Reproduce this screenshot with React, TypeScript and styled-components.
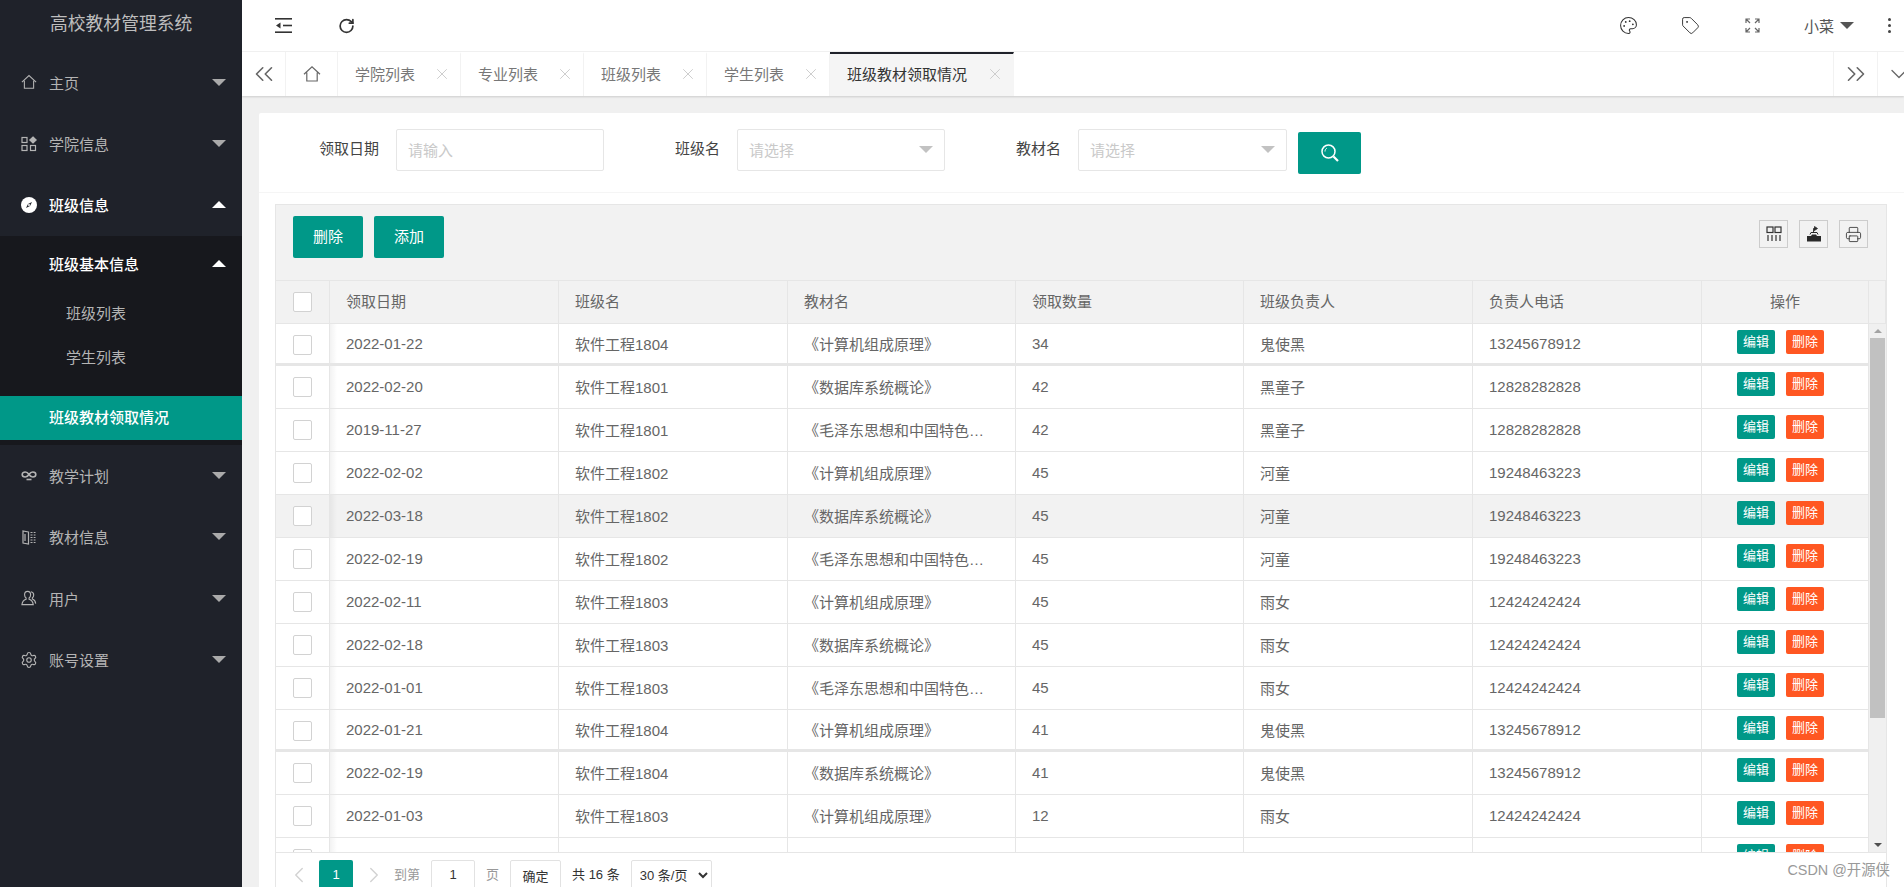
import React from "react";
import styled, { createGlobalStyle } from "styled-components";
import { ChevronsLeft, ChevronsRight, ChevronDown, ChevronLeft, ChevronRight, X, RotateCw, Palette, Tag, Settings, Printer } from "lucide-react";

const Global = createGlobalStyle`
  html, body { margin: 0; padding: 0; height: 100%; overflow: hidden; }
  body { font-family: "Liberation Sans", "Noto Sans CJK SC", sans-serif; font-size: 14px; color: #666; }
  * { box-sizing: border-box; }
`;

const Shell = styled.div`display: flex; width: 1904px; height: 887px; overflow: hidden; position: relative; background: #f0f0f0;`;
const Sidebar = styled.aside`width: 242px; flex: none; background: #1f222a; color: #b4b4b4; display: flex; flex-direction: column;`;
const Logo = styled.div`height: 52px; padding: 13px 0 0 50px; font-size: 17.8px; line-height: 22px; color: #bdbdbd;`;
const NavRow = styled.div<{ $on?: boolean }>`
  height: 61.4px; display: flex; align-items: center; padding: 0 16px 1px 21px; font-size: 15px;
  color: ${(p) => (p.$on ? "#fff" : "#b4b4b4")}; font-weight: ${(p) => (p.$on ? 500 : 400)};
`;
const NavIcon = styled.span`width: 16px; height: 16px; margin-right: 12px; display: flex; align-items: center; justify-content: center; color: inherit; svg { display: block; flex: none; }`;
const NavLabel = styled.span`flex: 1;`;
const Caret = styled.i<{ $up?: boolean; $on?: boolean }>`
  width: 0; height: 0; border-left: 7px solid transparent; border-right: 7px solid transparent;
  ${(p) => (p.$up ? `border-bottom: 7px solid ${p.$on ? "#fff" : "#aaa"};` : `border-top: 7px solid ${p.$on ? "#fff" : "#aaa"};`)}
`;
const UserCaret = styled.i`width: 0; height: 0; border-left: 7px solid transparent; border-right: 7px solid transparent; border-top: 7px solid #555;`;
const SubMenu = styled.div`background: #17181d; height: 209px; display: flex; flex-direction: column;`;
const SubHead = styled.div`height: 55px; display: flex; align-items: center; padding: 0 16px 1px 49px; font-size: 15px; color: #fff; font-weight: 500;`;
const SubLink = styled.div`height: 44px; line-height: 46px; padding-left: 66px; font-size: 15px; color: #b4b4b4;`;
const SubActive = styled.div`height: 44px; line-height: 44px; margin-top: 17px; padding-left: 49px; font-size: 15px; color: #fff; background: #009888; font-weight: 500;`;

const Main = styled.main`flex: 1; min-width: 0; display: flex; flex-direction: column;`;
const TopBar = styled.header`height: 52px; flex: none; background: #fff; border-bottom: 1px solid #f2f2f2; display: flex; align-items: center; color: #333;`;
const TopLeft = styled.button`width: 17px; height: 17px; padding: 0; border: 0; background: none; color: #333; display: flex; margin-left: 33px; margin-right: 13px;`;
const TopSpacer = styled.div`flex: 1;`;
const TopIcon = styled.span<{ $c?: string }>`width: 62px; display: flex; justify-content: center; color: ${(p) => p.$c || "#333"};`;
const UserName = styled.span`font-size: 15px; color: #555; margin-left: 20px; display: flex; align-items: center; gap: 6px;`;
const Dots = styled.span`margin-left: 34px; margin-right: 13px; display: flex; flex-direction: column; gap: 3px; i { width: 3px; height: 3px; border-radius: 50%; background: #444; display: block; }`;

const TabBar = styled.nav`height: 44px; flex: none; background: #fff; display: flex; align-items: stretch; box-shadow: 0 1px 2px rgba(0,0,0,.15); position: relative; z-index: 1;`;
const TabCell = styled.div<{ $w: number }>`width: ${(p) => p.$w}px; flex: none; display: flex; align-items: center; justify-content: center; color: #666; border-right: 1px solid #f2f2f2; padding-bottom: 1px;`;
const Tab = styled.div<{ $active?: boolean }>`
  flex: none; display: flex; align-items: center; justify-content: space-between; padding: 0 9px 3px 17px;
  width: ${(p) => (p.$active ? 184 : 123)}px; font-size: 15px;
  color: ${(p) => (p.$active ? "#333" : "#777")};
  background: ${(p) => (p.$active ? "#f5f5f5" : "#fff")};
  border-right: 1px solid ${(p) => (p.$active ? "#f5f5f5" : "#f2f2f2")};
  border-top: 2px solid ${(p) => (p.$active ? "#1f222a" : "transparent")};
  svg { color: #c4c4c4; flex: none; }
`;
const TabFill = styled.div`flex: 1;`;
const TabEdge = styled.div<{ $w: number }>`width: ${(p) => p.$w}px; flex: none; display: flex; align-items: center; justify-content: center; color: #666; border-left: 1px solid #f2f2f2; overflow: hidden; padding-bottom: 1px; svg { flex: none; }`;
const TabEdgeEnd = styled(TabEdge)`justify-content: flex-start; padding-left: 7px;`;

const Content = styled.div`flex: 1; min-height: 0; padding: 17px 0 0 17px; background: #f0f0f0;`;
const Card = styled.section`height: 100%; background: #fff; border-radius: 2px 0 0 0; display: flex; flex-direction: column;`;
const SearchForm = styled.form`height: 80px; flex: none; padding: 16px 0 0 22px; border-bottom: 1px solid #f5f5f5; display: flex; align-items: flex-start;`;
const FieldLabel = styled.label<{ $w: number }>`width: ${(p) => p.$w}px; height: 42px; line-height: 40px; text-align: right; font-size: 15px; color: #444; margin-right: 17px; flex: none;`;
const FieldBox = styled.div<{ $w: number }>`width: ${(p) => p.$w}px; height: 42px; border: 1px solid #e6e6e6; border-radius: 2px; flex: none; display: flex; align-items: center; justify-content: space-between; padding: 0 11px 2px; color: #c9c9c9; font-size: 15px;`;
const SelectArrow = styled.i`width: 0; height: 0; border-left: 7px solid transparent; border-right: 7px solid transparent; border-top: 7px solid #c2c2c2;`;
const SearchBtn = styled.button`width: 63px; height: 42px; margin: 3px 0 0 11px; border: 0; border-radius: 2px; background: #009888; color: #fff; display: flex; align-items: center; justify-content: center; padding: 0;`;

const Pane = styled.div`margin: 11px 17px 0 16px; border: 1px solid #e6e6e6; border-bottom: 0; flex: 1; min-height: 0; display: flex; flex-direction: column;`;
const Toolbar = styled.div`height: 75px; flex: none; background: #f2f2f2; padding: 11px 18px 0 17px; display: flex; align-items: flex-start; gap: 11px;`;
const ToolButton = styled.button`width: 70px; height: 42px; border: 0; border-radius: 2px; background: #009888; color: #fff; font: inherit; font-size: 15px; padding: 0 0 3px;`;
const ToolSpacer = styled.div`flex: 1;`;
const ToolIcon = styled.span`width: 29px; height: 28px; border: 1px solid #ccc; margin: 4px 0 0 0; display: flex; align-items: center; justify-content: center; color: #333;`;

const Grid = styled.table<{ $w: number }>`width: ${(p) => p.$w}px; border-collapse: separate; border-spacing: 0; table-layout: fixed; font-size: 15px; color: #666;`;
const HeadWrap = styled.div`flex: none; background: #f2f2f2; border-top: 1px solid #e6e6e6; height: 44px;`;
const Th = styled.th<{ $center?: boolean; $box?: boolean }>`
  height: 43px; padding: 0 ${(p) => (p.$box ? "0" : "16px 3px")}; font-weight: 400; color: #666;
  text-align: ${(p) => (p.$center ? "center" : "left")};
  border-right: 1px solid #e6e6e6; border-bottom: 1px solid #e6e6e6;
`;
const Body = styled.div`height: 528px; flex: none; display: flex; overflow: hidden;`;
const BodyClip = styled.div`flex: none; width: 1593px; overflow: hidden;`;
const Tr = styled.tr<{ $hl?: boolean }>`background: ${(p) => (p.$hl ? "#f2f2f2" : "#fff")};`;
const Td = styled.td<{ $thick?: boolean; $shade?: boolean; $box?: boolean }>`
  height: ${(p) => (p.$thick ? 42 : 43)}px; padding: 0 ${(p) => (p.$box ? "0" : "16px 2px")}; white-space: nowrap; overflow: hidden;
  border-right: 1px solid #e6e6e6;
  border-bottom: 1px solid #e6e6e6;
  ${(p) => (p.$thick ? "box-shadow: inset 0 -2px 0 #e6e6e6;" : "")}
  ${(p) => (p.$shade ? "background-image: linear-gradient(to right, rgba(0,0,0,.05), rgba(0,0,0,0) 7px);" : "")}
`;
const ActionTd = styled(Td)`padding: 6px 0 0 35px; vertical-align: top;`;
const Check = styled.span`display: block; width: 19px; height: 20px; margin: 0 auto 0 17px; background: #fff; border: 1px solid #d2d2d2; border-radius: 2px;`;
const Actions = styled.div`display: flex; gap: 11px;`;
const MiniBtn = styled.button<{ $danger?: boolean }>`width: 38px; height: 24px; padding: 0; border: 0; border-radius: 2px; color: #fff; font: inherit; font-size: 13px; line-height: 24px; background: ${(p) => (p.$danger ? "#ff5722" : "#009888")};`;
const ScrollTrack = styled.div`width: 17px; flex: none; background: #f0f0f0; display: flex; flex-direction: column; align-items: center;`;
const ThumbUp = styled.i`margin-top: 5px; width: 0; height: 0; border-left: 4px solid transparent; border-right: 4px solid transparent; border-bottom: 4px solid #a3a3a3;`;
const Thumb = styled.div`width: 15px; height: 380px; background: #c1c1c1; margin-top: 5px;`;
const ScrollFill = styled.div`flex: 1;`;
const ThumbDown = styled.i`margin-bottom: 5px; width: 0; height: 0; border-left: 4px solid transparent; border-right: 4px solid transparent; border-top: 4px solid #505050;`;

const Pager = styled.div`height: 44px; flex: none; border-top: 1px solid #e6e6e6; background: #fff; padding: 7px 0 0 17px; display: flex; align-items: flex-start; font-size: 13px; color: #333;`;
const PagerArrow = styled.span<{ $w: number }>`width: ${(p) => p.$w}px; height: 30px; display: flex; align-items: center; justify-content: center; color: #d2d2d2; flex: none; svg { flex: none; }`;
const PageNum = styled.span`width: 34px; height: 30px; line-height: 30px; text-align: center; background: #009888; color: #fff; border-radius: 2px; flex: none;`;
const PagerText = styled.span<{ $m: number; $muted?: boolean }>`height: 30px; line-height: 30px; margin-left: ${(p) => p.$m}px; color: ${(p) => (p.$muted ? "#999" : "#333")}; flex: none;`;
const PageInput = styled.span`width: 44px; height: 30px; line-height: 28px; margin-left: 11px; text-align: center; border: 1px solid #e2e2e2; border-radius: 2px; color: #333; flex: none;`;
const PageOk = styled.button`width: 51px; height: 30px; margin-left: 11px; padding: 0; background: #fff; border: 1px solid #e2e2e2; border-radius: 2px; color: #333; font: inherit; flex: none;`;
const PageSize = styled.select`width: 81px; height: 30px; margin-left: 11px; border: 1px solid #e2e2e2; border-radius: 2px; background: #fff; color: #333; font: inherit; padding: 0 4px; flex: none;`;
const Watermark = styled.div`position: absolute; right: 14px; top: 860px; font-size: 14.4px; line-height: 20px; color: #999;`;

const Line = { fill: "none", stroke: "currentColor", strokeWidth: 1.2 } as const;
const IconHome = ({ s = 16 }: { s?: number }) => (
  <svg width={s} height={s} viewBox="0 0 18 18" {...Line}><path d="M1 9.2 9 1.8l8 7.4M3.8 7.500V16h10.400V7.500" /></svg>
);
const IconApps = () => (
  <svg width="16" height="16" viewBox="0 0 16 16" {...Line}>
    <rect x="1" y="1.500" width="5" height="5" /><rect x="1" y="9.500" width="5" height="5" /><rect x="9.500" y="9.500" width="5" height="5" />
    <path d="M12 1l3.200 3-3.200 3-3.200-3z" fill="currentColor" />
  </svg>
);
const IconCompass = () => (
  <svg width="16" height="16" viewBox="0 0 16 16">
    <circle cx="8" cy="8" r="8" fill="#fff" />
    <path d="M11 5 9 9 5 11l2-4z" fill="#1f222a" />
    <circle cx="8" cy="8" r="1" fill="#fff" />
  </svg>
);
const IconLoop = () => (
  <svg width="16" height="16" viewBox="0 0 16 16" {...Line} strokeWidth={1.6}>
    <path d="M8 7.500C6.800 5.600 5.600 5 4.200 5 2.700 5 1.200 6 1.200 7.500S2.700 10 4.200 10C5.600 10 6.800 9.400 8 7.500c1.200-1.900 2.400-2.500 3.800-2.500 1.500 0 3 1 3 2.500s-1.500 2.500-3 2.500C10.400 10 9.200 9.400 8 7.500z" />
    <path d="M5.500 12.500h5" />
  </svg>
);
const IconBook = () => (
  <svg width="16" height="16" viewBox="0 0 16 16" {...Line}>
    <path d="M7.500 3 2 2v12l5.500 1zM4 5v7" />
    <path d="M9.500 3.500h5M9.500 6h5M9.500 8.500h5M9.500 11h5M9.500 13.500h5" strokeDasharray="2 1.200" />
  </svg>
);
const IconUsers = () => (
  <svg width="16" height="16" viewBox="0 0 17 17" {...Line}>
    <path d="M7 1.500c2 0 3.200 1.600 3.200 3.500 0 1.500-.7 2.800-1.600 3.500v1.300c2.500.8 4 1.800 4.400 5.700H1c.4-3.900 1.900-4.900 4.400-5.700V8.500C4.500 7.800 3.800 6.500 3.800 5c0-1.900 1.200-3.500 3.200-3.500z" />
    <path d="M10.500 1.800c1.900.3 3 1.700 3 3.400 0 1.300-.5 2.400-1.400 3.100v1.300c1.900.6 3.200 1.600 3.500 4.900" />
  </svg>
);
const IconIndent = () => (
  <svg width="17" height="17" viewBox="0 0 17 17" fill="currentColor">
    <rect x="0" y="1" width="17" height="1.600" /><rect x="8" y="7.700" width="9" height="1.600" /><rect x="0" y="14.400" width="17" height="1.600" />
    <path d="M5.500 5.500v6L1 8.500z" />
  </svg>
);
const IconFull = () => (
  <svg width="15" height="15" viewBox="0 0 15 15" {...Line}>
    <path d="M1 5V1h4M1 1l4 4M14 5V1h-4M14 1l-4 4M1 10v4h4M1 14l4-4M14 10v4h-4M14 14l-4-4" />
  </svg>
);
const IconCols = () => (
  <svg width="16" height="16" viewBox="0 0 16 16" {...Line}>
    <rect x="1" y="1" width="6" height="5.500" /><rect x="9" y="1" width="6" height="5.500" />
    <path d="M2 9v6M6 9v6M10 9v6M14 9v6" />
  </svg>
);
const IconExport = () => (
  <svg width="16" height="16" viewBox="0 0 16 16">
    <path d="M1 10h4l1-1.500h4l1 1.500h4v5.500H1z" fill="#2a2a2a" />
    <path d="M4 8.500l1-2h6l1 2" fill="none" stroke="#2a2a2a" strokeWidth="1" />
    <path d="M7.500 7V2.500h1.500M8.500 .5l3 2-3 2z" fill="#2a2a2a" stroke="#2a2a2a" strokeWidth=".8" />
  </svg>
);
const IconSearch = () => (
  <svg width="20" height="20" viewBox="0 0 20 20" fill="none" stroke="#fff" strokeWidth="1.500">
    <circle cx="8.500" cy="8.500" r="6.500" /><path d="M13.500 13.500l4.500 4.500" strokeWidth="2.200" /><path d="M5 8.500c0-1.500.7-2.700 1.800-3.300" strokeWidth="1" />
  </svg>
);

const tabs = ["学院列表", "专业列表", "班级列表", "学生列表"];
const book1 = "《计算机组成原理》";
const book2 = "《数据库系统概论》";
const book3 = "《毛泽东思想和中国特色…";
const g = ["鬼使黑", "13245678912"];
const b = ["黑童子", "12828282828"];
const h = ["河童", "19248463223"];
const y = ["雨女", "12424242424"];
const rows: [string, string, string, string, string[]][] = [
  ["2022-01-22", "软件工程1804", book1, "34", g],
  ["2022-02-20", "软件工程1801", book2, "42", b],
  ["2019-11-27", "软件工程1801", book3, "42", b],
  ["2022-02-02", "软件工程1802", book1, "45", h],
  ["2022-03-18", "软件工程1802", book2, "45", h],
  ["2022-02-19", "软件工程1802", book3, "45", h],
  ["2022-02-11", "软件工程1803", book1, "45", y],
  ["2022-02-18", "软件工程1803", book2, "45", y],
  ["2022-01-01", "软件工程1803", book3, "45", y],
  ["2022-01-21", "软件工程1804", book1, "41", g],
  ["2022-02-19", "软件工程1804", book2, "41", g],
  ["2022-01-03", "软件工程1803", book1, "12", y],
  ["", "", "", "", ["", ""]],
];
const widths = [54, 229, 229, 228, 228, 229, 229];

const Col = styled.col<{ $w: number }>`width: ${(p) => p.$w}px;`;
const Cols = ({ main, patch }: { main: number; patch?: number }) => (
  <colgroup>
    {widths.map((w, i) => <Col key={i} $w={w} />)}
    <Col $w={main} />
    {patch ? <Col $w={patch} /> : null}
  </colgroup>
);

export default function App() {
  const nav = (label: string, icon: React.ReactNode) => (
    <NavRow><NavIcon>{icon}</NavIcon><NavLabel>{label}</NavLabel><Caret /></NavRow>
  );
  return (
    <Shell>
      <Global />
      <Sidebar>
        <Logo>高校教材管理系统</Logo>
        {nav("主页", <IconHome />)}
        {nav("学院信息", <IconApps />)}
        <NavRow $on><NavIcon><IconCompass /></NavIcon><NavLabel>班级信息</NavLabel><Caret $up $on /></NavRow>
        <SubMenu>
          <SubHead><NavLabel>班级基本信息</NavLabel><Caret $up $on /></SubHead>
          <SubLink>班级列表</SubLink>
          <SubLink>学生列表</SubLink>
          <SubActive>班级教材领取情况</SubActive>
        </SubMenu>
        {nav("教学计划", <IconLoop />)}
        {nav("教材信息", <IconBook />)}
        {nav("用户", <IconUsers />)}
        {nav("账号设置", <Settings size={18} strokeWidth={1.5} />)}
      </Sidebar>
      <Main>
        <TopBar>
          <TopLeft aria-label="收起"><IconIndent /></TopLeft>
          <TopLeft aria-label="刷新"><RotateCw size={18} strokeWidth={2.4} /></TopLeft>
          <TopSpacer />
          <TopIcon><Palette size={19} strokeWidth={1.3} /></TopIcon>
          <TopIcon><Tag size={19} strokeWidth={1.2} /></TopIcon>
          <TopIcon $c="#666"><IconFull /></TopIcon>
          <UserName>小菜<UserCaret /></UserName>
          <Dots><i /><i /><i /></Dots>
        </TopBar>
        <TabBar>
          <TabCell $w={44}><ChevronsLeft size={30} strokeWidth={1.3} /></TabCell>
          <TabCell $w={52}><IconHome s={18} /></TabCell>
          {tabs.map((t) => (
            <Tab key={t}>{t}<X size={18} strokeWidth={1.1} /></Tab>
          ))}
          <Tab $active>班级教材领取情况<X size={18} strokeWidth={1.1} /></Tab>
          <TabFill />
          <TabEdge $w={44}><ChevronsRight size={30} strokeWidth={1.3} /></TabEdge>
          <TabEdgeEnd $w={27}><ChevronDown size={28} strokeWidth={1.1} /></TabEdgeEnd>
        </TabBar>
        <Content>
          <Card>
            <SearchForm>
              <FieldLabel $w={98}>领取日期</FieldLabel>
              <FieldBox $w={208}>请输入</FieldBox>
              <FieldLabel $w={116}>班级名</FieldLabel>
              <FieldBox $w={208}>请选择<SelectArrow /></FieldBox>
              <FieldLabel $w={116}>教材名</FieldLabel>
              <FieldBox $w={209}>请选择<SelectArrow /></FieldBox>
              <SearchBtn type="button" aria-label="搜索"><IconSearch /></SearchBtn>
            </SearchForm>
            <Pane>
              <Toolbar>
                <ToolButton>删除</ToolButton>
                <ToolButton>添加</ToolButton>
                <ToolSpacer />
                <ToolIcon><IconCols /></ToolIcon>
                <ToolIcon><IconExport /></ToolIcon>
                <ToolIcon><Printer size={17} strokeWidth={1.2} /></ToolIcon>
              </Toolbar>
              <HeadWrap>
                <Grid $w={1610}>
                  <Cols main={167} patch={17} />
                  <thead>
                    <tr>
                      <Th $box><Check /></Th>
                      <Th>领取日期</Th>
                      <Th>班级名</Th>
                      <Th>教材名</Th>
                      <Th>领取数量</Th>
                      <Th>班级负责人</Th>
                      <Th>负责人电话</Th>
                      <Th $center>操作</Th>
                      <Th $box />
                    </tr>
                  </thead>
                </Grid>
              </HeadWrap>
              <Body>
                <BodyClip>
                  <Grid $w={1593}>
                    <Cols main={167} />
                    <tbody>
                      {rows.map((r, i) => {
                        const thick = i === 0 || i === 9;
                        return (
                          <Tr key={i} $hl={i === 4}>
                            <Td $box $thick={thick}><Check /></Td>
                            <Td $thick={thick} $shade>{r[0]}</Td>
                            <Td $thick={thick}>{r[1]}</Td>
                            <Td $thick={thick}>{r[2]}</Td>
                            <Td $thick={thick}>{r[3]}</Td>
                            <Td $thick={thick}>{r[4][0]}</Td>
                            <Td $thick={thick}>{r[4][1]}</Td>
                            <ActionTd $thick={thick}>
                              <Actions>
                                <MiniBtn>编辑</MiniBtn>
                                <MiniBtn $danger>删除</MiniBtn>
                              </Actions>
                            </ActionTd>
                          </Tr>
                        );
                      })}
                    </tbody>
                  </Grid>
                </BodyClip>
                <ScrollTrack>
                  <ThumbUp />
                  <Thumb />
                  <ScrollFill />
                  <ThumbDown />
                </ScrollTrack>
              </Body>
              <Pager>
                <PagerArrow $w={12}><ChevronLeft size={26} strokeWidth={1.3} /></PagerArrow>
                <PagerArrow $w={14} />
                <PageNum>1</PageNum>
                <PagerArrow $w={41}><ChevronRight size={26} strokeWidth={1.3} /></PagerArrow>
                <PagerText $m={0} $muted>到第</PagerText>
                <PageInput>1</PageInput>
                <PagerText $m={11} $muted>页</PagerText>
                <PageOk>确定</PageOk>
                <PagerText $m={11}>共 16 条</PagerText>
                <PageSize defaultValue="30"><option value="30">30 条/页</option></PageSize>
              </Pager>
            </Pane>
          </Card>
        </Content>
      </Main>
      <Watermark>CSDN @开源侠</Watermark>
    </Shell>
  );
}
